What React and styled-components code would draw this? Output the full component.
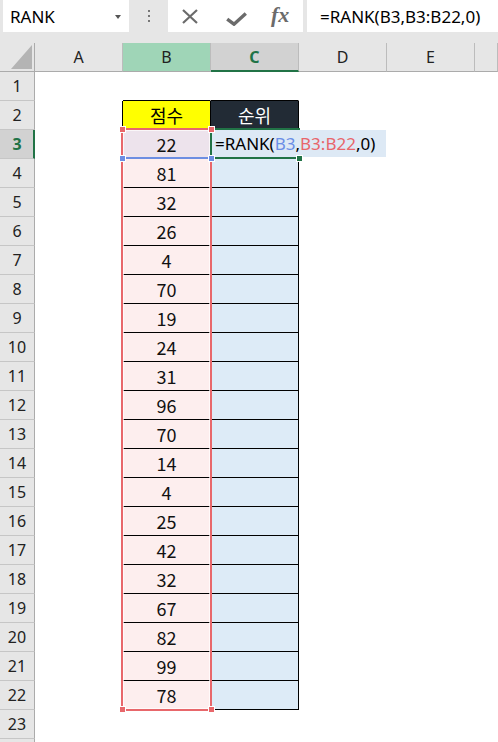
import React from 'react';
import styled, { createGlobalStyle } from 'styled-components';

const GlobalStyle = createGlobalStyle`
  html, body { margin: 0; padding: 0; background: #fff; }
  body { font-family: "Noto Sans", "Noto Sans CJK KR", sans-serif; }
  #root { width: 498px; height: 742px; overflow: hidden; }
`;

const Page = styled.div`
  width: 498px;
  height: 742px;
  overflow: hidden;
  background: #fff;
  display: flex;
  flex-direction: column;
`;

const Toolbar = styled.div`
  height: 43px;
  flex: none;
  box-sizing: border-box;
  background: #e6e6e6;
  display: flex;
  align-items: flex-start;
  padding-left: 3px;
`;

const NameBox = styled.div`
  width: 126px;
  height: 32px;
  box-sizing: border-box;
  background: #fff;
  display: flex;
  align-items: center;
  justify-content: space-between;
  padding: 0 8px 0 7px;
  font-family: "Noto Sans", sans-serif;
  font-size: 17px;
  color: #000;
`;

const Caret = styled.span`
  width: 0;
  height: 0;
  border-left: 3.5px solid transparent;
  border-right: 3.5px solid transparent;
  border-top: 4px solid #555;
  margin-top: 1px;
`;

const DotsZone = styled.div`
  width: 39px;
  height: 32px;
  display: flex;
  flex-direction: column;
  align-items: center;
  justify-content: center;
  gap: 3px;
`;

const Dot = styled.span`
  width: 2px;
  height: 2px;
  background: #777;
`;

const ButtonsBox = styled.div`
  width: 135px;
  height: 32px;
  box-sizing: border-box;
  background: #fff;
  display: flex;
  align-items: center;
  padding-left: 13px;
  gap: 27px;
`;

const Fx = styled.span`
  font-family: "Liberation Serif", "Times New Roman", serif;
  font-style: italic;
  font-weight: 700;
  font-size: 22px;
  color: #6b6b6b;
  line-height: 1;
  margin-top: -2px;
  margin-left: -3px;
`;

const FormulaInput = styled.div`
  flex: 1;
  height: 32px;
  margin-left: 4px;
  box-sizing: border-box;
  background: #fff;
  display: flex;
  align-items: center;
  padding-left: 13px;
  font-family: "Noto Sans", sans-serif;
  font-size: 17px;
  color: #000;
  white-space: nowrap;
`;

const Sheet = styled.div`
  position: relative;
  display: grid;
  grid-template-columns: 35px repeat(5, 88px) 1fr;
  grid-auto-rows: 29px;
`;

const Corner = styled.div`
  box-sizing: border-box;
  background: #e6e6e6;
  border-right: 1px solid #ababab;
  border-bottom: 1px solid #ababab;
  display: flex;
  align-items: flex-end;
  justify-content: flex-end;
  padding: 0 2px 2px 0;
`;

const ColHeader = styled.div`
  box-sizing: border-box;
  background: ${p => (p.$state === 'active' ? '#d2d2d2' : p.$state === 'ref' ? '#9fd5b7' : '#e6e6e6')};
  border-right: 1px solid #bcbcbc;
  border-bottom: ${p => (p.$state === 'active' ? '2px solid #217346' : '1px solid #ababab')};
  color: ${p => (p.$state === 'active' ? '#217346' : '#222')};
  font-weight: ${p => (p.$state === 'active' ? 700 : 400)};
  font-family: "Noto Sans", sans-serif;
  font-size: 16px;
  display: flex;
  align-items: center;
  justify-content: center;
  padding-top: ${p => (p.$state === 'active' ? '1px' : '0')};
`;

const RowHeader = styled.div`
  box-sizing: border-box;
  background: ${p => (p.$active ? '#d2d2d2' : '#e6e6e6')};
  border-right: ${p => (p.$active ? '2px solid #217346' : '1px solid #ababab')};
  border-bottom: 1px solid #c6c6c6;
  color: ${p => (p.$active ? '#217346' : '#222')};
  font-weight: ${p => (p.$active ? 700 : 400)};
  font-family: "Noto Sans", sans-serif;
  font-size: 16px;
  display: flex;
  align-items: center;
  justify-content: center;
  padding-left: ${p => (p.$active ? '1px' : '0')};
`;

const Cell = styled.div`
  box-sizing: border-box;
  border-right: 1px solid ${p => p.$br || 'transparent'};
  border-bottom: 1px solid ${p => p.$bb || 'transparent'};
  background: ${p => p.$bg || '#fff'};
  color: ${p => p.$fg || '#111'};
  font-family: "Noto Sans CJK KR", "Noto Sans", sans-serif;
  font-size: 18px;
  display: flex;
  align-items: center;
  justify-content: center;
  line-height: 1;
`;

const RefRange = styled.div`
  position: absolute;
  left: 121px;
  top: 85px;
  width: 91px;
  height: 583px;
  box-sizing: border-box;
  border: 2px solid #e8676b;
  box-shadow: inset 0 0 0 1px rgba(255, 255, 255, 0.7);
  pointer-events: none;
`;

const BlueLine = styled.div`
  position: absolute;
  left: 123px;
  top: 114px;
  width: 87px;
  height: 2px;
  background: #6d8ee2;
`;

const Handle = styled.div`
  position: absolute;
  width: 5px;
  height: 5px;
  background: ${p => p.$color};
  box-shadow: 0 0 0 1px #fff;
  left: ${p => p.$x - 2}px;
  top: ${p => p.$y - 2}px;
`;

const EditBox = styled.div`
  position: absolute;
  left: 212px;
  top: 87px;
  width: 174px;
  height: 27px;
  background: #dde9f5;
  display: flex;
  align-items: center;
  padding-left: 3px;
  box-sizing: border-box;
  font-family: "Noto Sans", sans-serif;
  font-size: 17px;
  color: #000;
  white-space: nowrap;
`;

const ActiveBorder = styled.div`
  position: absolute;
  left: 210px;
  top: 85px;
  width: 90px;
  height: 31px;
  box-sizing: border-box;
  border: 2px solid #217346;
  border-right: none;
  pointer-events: none;
`;

const Ref = styled.span`
  color: ${p => p.$c};
`;

const XIcon = () => (
  <svg width="18" height="15" viewBox="0 0 18 15">
    <path d="M2 1 L16 14 M16 1 L2 14" stroke="#6b6b6b" strokeWidth="2.2" fill="none" />
  </svg>
);

const CheckIcon = () => (
  <svg width="21" height="14" viewBox="0 0 21 14" style={{ marginTop: 5 }}>
    <path d="M1.2 7.2 L8 12.2 L19.8 1.5" stroke="#6b6b6b" strokeWidth="3.4" fill="none" />
  </svg>
);

const CornerTriangle = () => (
  <svg width="21" height="24" viewBox="0 0 21 24">
    <polygon points="0,24 21,24 21,0" fill="#b4b4b4" />
  </svg>
);

const scores = [22, 81, 32, 26, 4, 70, 19, 24, 31, 96, 70, 14, 4, 25, 42, 32, 67, 82, 99, 78];
const cols = ['A', 'B', 'C', 'D', 'E', ''];
const TOTAL_ROWS = 24;

function renderRow(r) {
  const cells = [];
  cells.push(
    <RowHeader key="h" $active={r === 3}>
      {r <= 23 ? r : ''}
    </RowHeader>
  );
  const inTable = r >= 2 && r <= 22;
  cols.forEach(c => {
    const key = `${c || 'F'}${r}`;
    if (c === 'A') {
      cells.push(<Cell key={key} $br={inTable ? '#000' : undefined} />);
    } else if (c === 'B' || c === 'C') {
      if (r === 1) {
        cells.push(<Cell key={key} $bb="#000" />);
      } else if (r === 2) {
        cells.push(
          c === 'B' ? (
            <Cell key={key} $br="#000" $bb="#000" $bg="#ffff00" $fg="#000">
              점수
            </Cell>
          ) : (
            <Cell key={key} $br="#000" $bb="#000" $bg="#222b35" $fg="#fff">
              순위
            </Cell>
          )
        );
      } else if (inTable) {
        if (c === 'B') {
          cells.push(
            <Cell key={key} $br="#000" $bb="#000" $bg={r === 3 ? '#ede3ec' : '#fdeeee'}>
              {scores[r - 3]}
            </Cell>
          );
        } else {
          cells.push(<Cell key={key} $br="#000" $bb="#000" $bg="#ddebf7" />);
        }
      } else {
        cells.push(<Cell key={key} />);
      }
    } else {
      cells.push(<Cell key={key} />);
    }
  });
  return cells;
}

export default function App() {
  const rows = [];
  for (let r = 1; r <= TOTAL_ROWS; r++) rows.push(...renderRow(r));
  return (
    <>
      <GlobalStyle />
      <Page>
        <Toolbar>
          <NameBox>
            RANK
            <Caret />
          </NameBox>
          <DotsZone>
            <Dot />
            <Dot />
            <Dot />
          </DotsZone>
          <ButtonsBox>
            <XIcon />
            <CheckIcon />
            <Fx>fx</Fx>
          </ButtonsBox>
          <FormulaInput>=RANK(B3,B3:B22,0)</FormulaInput>
        </Toolbar>
        <Sheet>
          <Corner>
            <CornerTriangle />
          </Corner>
          {cols.map(c => (
            <ColHeader key={c || 'F'} $state={c === 'C' ? 'active' : c === 'B' ? 'ref' : undefined}>
              {c}
            </ColHeader>
          ))}
          {rows}
          <RefRange />
          <BlueLine />
          <EditBox>
            =RANK(<Ref $c="#6a8ee6">B3</Ref>,<Ref $c="#e8666b">B3:B22</Ref>,0)
          </EditBox>
          <ActiveBorder />
          <Handle $color="#e8676b" $x={122} $y={86} />
          <Handle $color="#e8676b" $x={211} $y={86} />
          <Handle $color="#6d8ee2" $x={122} $y={115} />
          <Handle $color="#6d8ee2" $x={211} $y={115} />
          <Handle $color="#e8676b" $x={122} $y={666} />
          <Handle $color="#e8676b" $x={211} $y={666} />
          <Handle $color="#217346" $x={299} $y={115} />
        </Sheet>
      </Page>
    </>
  );
}
